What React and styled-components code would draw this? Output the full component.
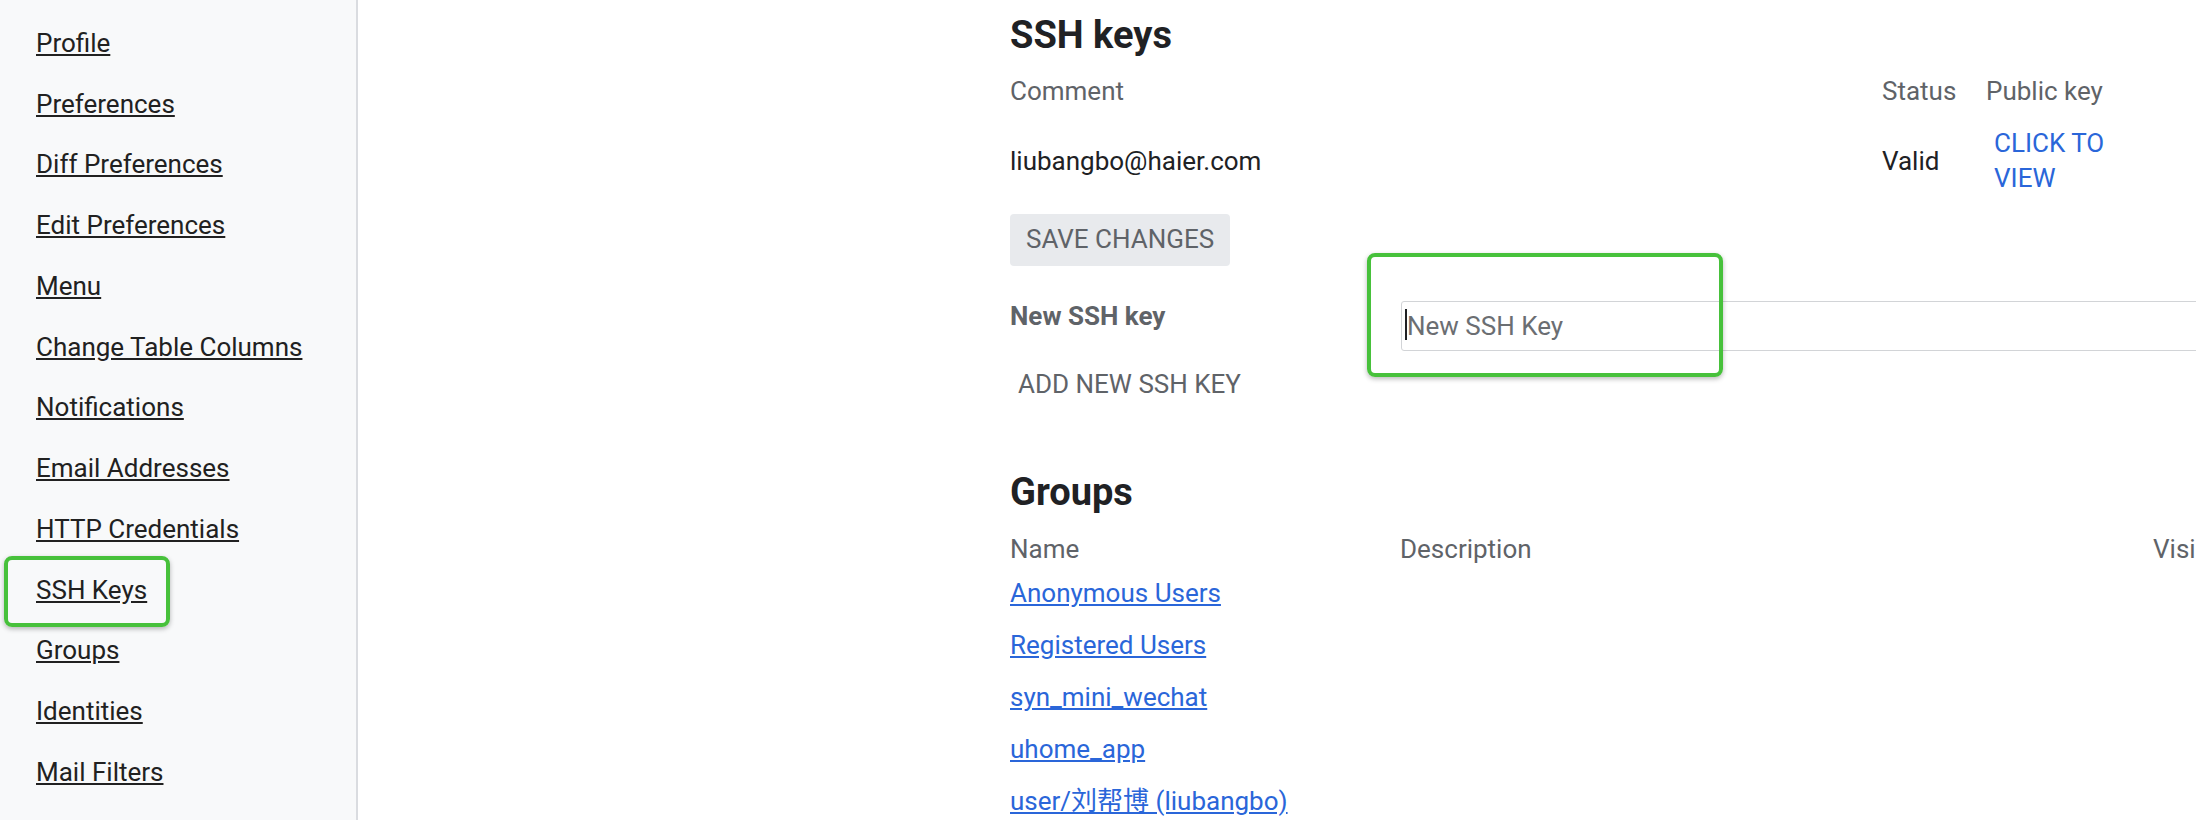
import React from 'react';
import styled, { createGlobalStyle } from 'styled-components';

const Global = createGlobalStyle`
  html, body { margin: 0; padding: 0; background: #ffffff; overflow: hidden; }
  body {
    font-family: Roboto, "Noto Sans CJK SC", sans-serif;
    font-size: 26px;
    color: #202124;
  }
`;

const Page = styled.div`
  display: flex;
  height: 820px;
  overflow: hidden;
`;

const Sidebar = styled.nav`
  flex: 0 0 356px;
  background: #f8f9fa;
  border-right: 2px solid #dadce0;
  padding-top: 12.75px;
`;

const NavItem = styled.div`
  position: relative;
  height: 60.75px;
  line-height: 60.75px;
  padding-left: 36px;
  white-space: nowrap;
`;

const NavLink = styled.a`
  color: #212121;
  text-decoration: underline;
  text-underline-offset: 2px;
  cursor: pointer;
`;

const Highlight = styled.div`
  position: absolute;
  left: ${p => p.$left}px;
  top: ${p => p.$top}px;
  width: ${p => p.$w}px;
  height: ${p => p.$h}px;
  box-sizing: border-box;
  border: 4px solid #47c13b;
  border-radius: 8px;
  box-shadow: 0 2px 5px rgba(0, 0, 0, 0.28);
  pointer-events: none;
`;

const Main = styled.main`
  flex: 1;
  min-width: 0;
  padding: 11px 0 0 652px;
  overflow: hidden;
`;

const Heading = styled.h2`
  margin: ${p => p.$mt || 0}px 0 0;
  font-size: 38px;
  font-weight: 700;
  line-height: 48px;
  color: #202124;
`;

const Table = styled.div`
  display: grid;
  grid-template-columns: ${p => p.$cols};
  width: max-content;
  margin-top: ${p => p.$mt || 0}px;
`;

const HeaderCell = styled.div`
  color: #5f6368;
  line-height: 36px;
  white-space: nowrap;
`;

const Cell = styled.div`
  display: flex;
  align-items: center;
  padding: 10px 0;
  line-height: 35px;
  color: #202124;
`;

const LinkButton = styled.button`
  width: 130px;
  padding: 7px 8px;
  border: none;
  background: transparent;
  font: inherit;
  line-height: 35px;
  text-align: left;
  text-transform: uppercase;
  color: #2a66d9;
  cursor: pointer;
`;

const GreyButton = styled.button`
  display: block;
  margin-top: ${p => p.$mt || 0}px;
  padding: 12px ${p => (p.$flat ? 8 : 16)}px 14px;
  border: none;
  border-radius: 4px;
  background: ${p => (p.$flat ? 'transparent' : '#e8eaed')};
  font: inherit;
  line-height: 26px;
  color: #5f6368;
  text-transform: uppercase;
`;

const KeyRow = styled.div`
  display: flex;
  align-items: flex-start;
  margin-top: 35px;
`;

const KeyLabel = styled.div`
  flex: 0 0 391px;
  margin-top: 2px;
  font-weight: 700;
  line-height: 26px;
  color: #5f6368;
`;

const InputWrap = styled.div`
  position: relative;
  &::before {
    content: '';
    position: absolute;
    left: 4px;
    top: 8px;
    width: 2px;
    height: 31px;
    background: #202124;
  }
`;

const KeyInput = styled.input`
  display: block;
  width: 900px;
  height: 50px;
  box-sizing: border-box;
  padding: 0 5px;
  border: 1px solid #d2d4d7;
  border-radius: 3px;
  font: inherit;
  color: #202124;
  outline: none;
  &::placeholder { color: #6b6e72; }
`;

const GroupCell = styled.div`
  line-height: 52px;
  white-space: nowrap;
`;

const GroupLink = styled.a`
  color: #2a66d9;
  text-decoration: underline;
  text-underline-offset: 2px;
  cursor: pointer;
`;

const navItems = [
  'Profile', 'Preferences', 'Diff Preferences', 'Edit Preferences', 'Menu',
  'Change Table Columns', 'Notifications', 'Email Addresses', 'HTTP Credentials',
  'SSH Keys', 'Groups', 'Identities', 'Mail Filters',
];

const groups = [
  'Anonymous Users', 'Registered Users', 'syn_mini_wechat', 'uhome_app',
  'user/刘帮博 (liubangbo)',
];

export default function App() {
  return (
    <>
      <Global />
      <Page>
        <Sidebar>
          {navItems.map(item => (
            <NavItem key={item}>
              <NavLink>{item}</NavLink>
              {item === 'SSH Keys' && <Highlight $left={4} $top={-4} $w={166} $h={71} />}
            </NavItem>
          ))}
        </Sidebar>
        <Main>
          <Heading>SSH keys</Heading>
          <Table $cols="872px 104px 220px 200px" $mt={14}>
            <HeaderCell>Comment</HeaderCell>
            <HeaderCell>Status</HeaderCell>
            <HeaderCell>Public key</HeaderCell>
            <HeaderCell />
            <Cell>liubangbo@haier.com</Cell>
            <Cell>Valid</Cell>
            <Cell><LinkButton>Click to view</LinkButton></Cell>
            <Cell />
          </Table>
          <GreyButton $mt={1}>Save changes</GreyButton>
          <KeyRow>
            <KeyLabel>New SSH key</KeyLabel>
            <InputWrap>
              <KeyInput placeholder="New SSH Key" />
              <Highlight $left={-34} $top={-48} $w={356} $h={124} />
            </InputWrap>
          </KeyRow>
          <GreyButton $flat $mt={8}>Add new SSH key</GreyButton>
          <Heading $mt={57}>Groups</Heading>
          <Table $cols="390px 753px 200px" $mt={15}>
            <HeaderCell>Name</HeaderCell>
            <HeaderCell>Description</HeaderCell>
            <HeaderCell>Visible to all</HeaderCell>
            {groups.map(g => (
              <React.Fragment key={g}>
                <GroupCell><GroupLink>{g}</GroupLink></GroupCell>
                <GroupCell />
                <GroupCell />
              </React.Fragment>
            ))}
          </Table>
        </Main>
      </Page>
    </>
  );
}
